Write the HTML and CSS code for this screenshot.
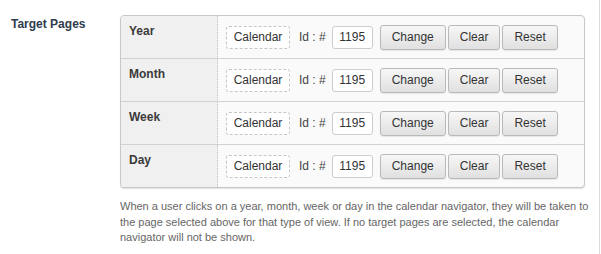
FILE: index.html
```html
<!DOCTYPE html>
<html lang="en">
<head>
<meta charset="UTF-8">
<title>Target Pages</title>
<link rel="stylesheet" href="styles.css">
</head>
<body>

<div class="panel">
  <div class="field">
    <label class="field-label">Target Pages</label>
    <div class="field-body">
      <table class="targets">
        <tr>
          <th>Year</th>
          <td>
            <div class="controls">
              <span class="page-name">Calendar</span>
              <span class="id-label">Id : #</span>
              <input type="text" class="page-id" value="1195">
              <div class="buttons">
                <button>Change</button>
                <button>Clear</button>
                <button>Reset</button>
              </div>
            </div>
          </td>
        </tr>
        <tr>
          <th>Month</th>
          <td>
            <div class="controls">
              <span class="page-name">Calendar</span>
              <span class="id-label">Id : #</span>
              <input type="text" class="page-id" value="1195">
              <div class="buttons">
                <button>Change</button>
                <button>Clear</button>
                <button>Reset</button>
              </div>
            </div>
          </td>
        </tr>
        <tr>
          <th>Week</th>
          <td>
            <div class="controls">
              <span class="page-name">Calendar</span>
              <span class="id-label">Id : #</span>
              <input type="text" class="page-id" value="1195">
              <div class="buttons">
                <button>Change</button>
                <button>Clear</button>
                <button>Reset</button>
              </div>
            </div>
          </td>
        </tr>
        <tr>
          <th>Day</th>
          <td>
            <div class="controls">
              <span class="page-name">Calendar</span>
              <span class="id-label">Id : #</span>
              <input type="text" class="page-id" value="1195">
              <div class="buttons">
                <button>Change</button>
                <button>Clear</button>
                <button>Reset</button>
              </div>
            </div>
          </td>
        </tr>
      </table>
      <p class="help">When a user clicks on a year, month, week or day in the calendar navigator, they will be taken to the page selected above for that type of view. If no target pages are selected, the calendar navigator will not be shown.</p>
    </div>
  </div>
</div>

</body>
</html>
```

FILE: styles.css
```css
* {
  box-sizing: border-box;
}

body {
  margin: 0;
  background: #fff;
  font-family: 'Liberation Sans', Arial, sans-serif;
  font-size: 12px;
  color: #333;
}

.panel {
  width: 600px;
  height: 254px;
  border-right: 1px solid #dcdcdc;
}

.field {
  display: flex;
  padding-top: 15px;
}

.field-label {
  width: 120px;
  padding: 2px 0 0 11px;
  font-weight: bold;
  font-size: 12px;
  color: #2f3a4d;
}

.field-body {
  width: 478px;
}

.targets {
  width: 465px;
  border-collapse: separate;
  border-spacing: 0;
  border: 1px solid #c8c8c8;
  border-radius: 4px;
  overflow: hidden;
  box-shadow: 0 1px 1px rgba(0, 0, 0, 0.12);
  background: #fafafa;
}

.targets th,
.targets td {
  box-sizing: content-box;
}

.targets th {
  width: 80px;
  height: 34px;
  padding: 8px 8px 0;
  text-align: left;
  vertical-align: top;
  font-size: 12px;
  font-weight: bold;
  color: #3a3a3a;
  background: #f0f0f0;
  border-right: 1px dotted #c4c4c4;
}

.targets td {
  height: 42px;
  padding: 0 0 0 8px;
  vertical-align: middle;
}

.targets tr:not(:last-child) th,
.targets tr:not(:last-child) td {
  border-bottom: 1px solid #d2d2d2;
}

.controls {
  display: flex;
  align-items: center;
}

.page-name {
  width: 64px;
  height: 23px;
  line-height: 21px;
  text-align: center;
  background: #fff;
  border: 1px dashed #c6c6c6;
  border-radius: 3px;
  color: #333;
}

.id-label {
  margin: 0 6px 0 9px;
  color: #444;
}

.page-id {
  width: 41px;
  height: 23px;
  padding: 0;
  text-align: center;
  font-family: inherit;
  font-size: 12px;
  color: #333;
  background: #fff;
  border: 1px solid #cdcdcd;
  border-radius: 3px;
}

.buttons {
  display: flex;
  gap: 2px;
  margin-left: 7px;
}

.buttons button {
  height: 25px;
  padding: 0 11px;
  font-family: inherit;
  font-size: 12px;
  color: #333;
  background: linear-gradient(#f7f7f7, #e0e0e0);
  border: 1px solid #b9b9b9;
  border-radius: 3px;
  box-shadow: 0 1px 1px rgba(0, 0, 0, 0.08);
}

.help {
  margin: 11px 0 0;
  font-size: 11px;
  line-height: 15.5px;
  color: #666;
}
```
